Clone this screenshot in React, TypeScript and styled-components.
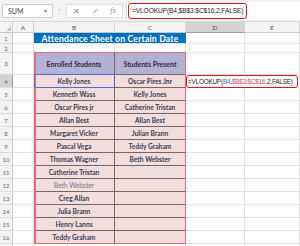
import styled, { createGlobalStyle, css } from 'styled-components';

const GlobalStyle = createGlobalStyle`
  html, body {
    margin: 0;
    padding: 0;
    background: #ffffff;
  }
  body {
    font-family: 'Lato', 'Liberation Sans', sans-serif;
    width: 300px;
    height: 246px;
    overflow: hidden;
  }
`;

const Page = styled.div`
  width: 300px;
  height: 246px;
  overflow: hidden;
  background: #ffffff;
`;

const FormulaBar = styled.div`
  display: flex;
  align-items: center;
  height: 22px;
  padding: 0 0 0 2px;
  background: #f3f3f3;
  border-bottom: 1px solid #d6d6d6;
  box-sizing: border-box;
`;

const NameBox = styled.div`
  display: flex;
  align-items: center;
  justify-content: space-between;
  width: 51px;
  height: 14px;
  padding: 0 4px 0 5px;
  box-sizing: border-box;
  background: #ffffff;
  border: 1px solid #cfcfcf;
  font-size: 7px;
  color: #444444;
`;

const Caret = styled.span`
  font-size: 5px;
  color: #777777;
`;

const Dots = styled.div`
  width: 13px;
  text-align: center;
  color: #b0b0b0;
  font-size: 7px;
`;

const ButtonBox = styled.div`
  display: flex;
  align-items: center;
  justify-content: space-around;
  width: 57px;
  height: 14px;
  background: #ffffff;
  border: 1px solid #dedede;
  box-sizing: border-box;
  color: #8a8a8a;
  font-size: 8px;
`;

const Fx = styled.span`
  font-style: italic;
  font-family: 'Liberation Serif', serif;
`;

const FormulaInput = styled.div`
  flex: 1;
  height: 18px;
  margin-left: 3px;
  display: flex;
  align-items: center;
  background: #ffffff;
  border-left: 1px solid #dedede;
`;

const Callout = styled.div`
  display: flex;
  align-items: center;
  height: 14px;
  padding: 0 3px;
  margin-left: 1px;
  border: 1.5px solid #e2121b;
  border-radius: 3px;
  font-family: 'Liberation Sans', sans-serif;
  font-size: 6.6px;
  color: #222222;
  letter-spacing: -0.1px;
  white-space: nowrap;
`;

const gridTemplate = css`
  display: grid;
  grid-template-columns: 13px 21px 81px 71px 59px 55px;
  grid-template-rows: 11px 11px 9px 22px repeat(13, 13px) 13px;
`;

const SheetWrap = styled.div`
  position: relative;
`;

const Sheet = styled.div`
  ${gridTemplate};
`;

const Overlay = styled.div`
  ${gridTemplate};
  position: absolute;
  inset: 0;
  pointer-events: none;
`;

const ColHead = styled.div<{ $active?: boolean }>`
  display: flex;
  align-items: center;
  justify-content: center;
  font-size: 6.5px;
  color: #555555;
  background: ${(p) => (p.$active ? '#d3d3d3' : '#f3f3f3')};
  border-right: 1px solid #d4d4d4;
  border-bottom: 1px solid ${(p) => (p.$active ? '#9c9c9c' : '#c8c8c8')};
  box-sizing: border-box;
`;

const Corner = styled(ColHead)`
  position: relative;
  &::after {
    content: '';
    position: absolute;
    right: 1px;
    bottom: 1px;
    border-left: 5px solid transparent;
    border-bottom: 5px solid #c5c5c5;
  }
`;

const RowHead = styled.div<{ $active?: boolean }>`
  display: flex;
  align-items: center;
  justify-content: center;
  font-size: 6px;
  color: #666666;
  background: ${(p) => (p.$active ? '#d3d3d3' : '#f3f3f3')};
  border-right: 1px solid ${(p) => (p.$active ? '#9c9c9c' : '#c8c8c8')};
  border-bottom: 1px solid #dcdcdc;
  box-sizing: border-box;
`;

const Cell = styled.div`
  border-right: 1px solid #e1e1e1;
  border-bottom: 1px solid #e1e1e1;
  box-sizing: border-box;
`;

const Title = styled.div`
  grid-column: span 2;
  display: flex;
  align-items: center;
  justify-content: center;
  background: #0070c0;
  color: #ffffff;
  font-weight: 700;
  font-size: 8.7px;
  letter-spacing: 0.15px;
  border-bottom: 1px solid #e1e1e1;
  box-sizing: border-box;
`;

const tableCell = css`
  display: flex;
  align-items: center;
  justify-content: center;
  border-right: 1px solid #75666a;
  border-bottom: 1px solid #75666a;
  box-sizing: border-box;
  font-size: 6.7px;
  font-weight: 700;
  white-space: nowrap;
`;

const HeadCell = styled.div`
  ${tableCell};
  background: #b3b2d4;
  color: #2b2b3a;
  font-size: 7px;
`;

const BodyCell = styled.div<{ $light?: boolean }>`
  ${tableCell};
  background: #f2dddc;
  color: ${(p) => (p.$light ? '#7d7595' : '#3a3e55')};
  font-weight: ${(p) => (p.$light ? 400 : 700)};
`;

const FormulaCell = styled.div`
  grid-column: span 2;
  display: flex;
  align-items: center;
  padding-left: 2px;
  font-family: 'Liberation Sans', sans-serif;
  font-size: 6.3px;
  letter-spacing: -0.15px;
  color: #222222;
  white-space: nowrap;
  border-bottom: 1px solid #e1e1e1;
  box-sizing: border-box;
`;

const Ref = styled.span<{ $color: string }>`
  color: ${(p) => p.$color};
`;

const RangeMark = styled.div`
  grid-column: 3 / 5;
  grid-row: 4 / 18;
  border: 1px solid #e26b7a;
  border-left-width: 2px;
  box-sizing: border-box;
  margin-top: -1px;
`;

const CellMark = styled.div`
  grid-column: 3 / 4;
  grid-row: 5 / 6;
  border: 1px solid #4a6fd0;
  box-sizing: border-box;
  margin-top: -1px;
`;

const Annotation = styled.div`
  grid-column: 5 / 7;
  grid-row: 5 / 6;
  border: 1.5px solid #e2121b;
  border-radius: 3px;
  margin: 0 2px 0 0;
  box-sizing: border-box;
`;

const Row = styled.div`
  display: contents;
`;

const enrolled = [
  'Kelly Jones',
  'Kenneth Wass',
  'Oscar Pires jr',
  'Allan Best',
  'Margaret Vicker',
  'Pascal Vega',
  'Thomas Wagner',
  'Catherine Tristan',
  'Beth Webster',
  'Creg Allan',
  'Julia Brann',
  'Henry Lanns',
  'Teddy Graham',
];

const present = [
  'Oscar Pires Jnr',
  'Kelly Jones',
  'Catherine Tristan',
  'Allan Best',
  'Julian Brann',
  'Teddy Graham',
  'Beth Webster',
  '',
  '',
  '',
  '',
  '',
  '',
];

function App() {
  return (
    <Page>
      <GlobalStyle />
      <FormulaBar>
        <NameBox>
          SUM
          <Caret>▼</Caret>
        </NameBox>
        <Dots>⋮</Dots>
        <ButtonBox>
          <span>✕</span>
          <span>✓</span>
          <Fx>fx</Fx>
        </ButtonBox>
        <FormulaInput>
          <Callout>=VLOOKUP(B4,$B$3:$C$16,2,FALSE)</Callout>
        </FormulaInput>
      </FormulaBar>
      <SheetWrap>
        <Sheet>
          <Corner />
          <ColHead>A</ColHead>
          <ColHead>B</ColHead>
          <ColHead>C</ColHead>
          <ColHead $active>D</ColHead>
          <ColHead>E</ColHead>

          <RowHead>1</RowHead>
          <Cell />
          <Title>Attendance Sheet on Certain Date</Title>
          <Cell />
          <Cell />

          <RowHead>2</RowHead>
          <Cell />
          <Cell />
          <Cell />
          <Cell />
          <Cell />

          <RowHead>3</RowHead>
          <Cell />
          <HeadCell>Enrolled Students</HeadCell>
          <HeadCell>Students Present</HeadCell>
          <Cell />
          <Cell />

          {enrolled.map((name, i) => (
            <Row key={name}>
              <RowHead $active={i === 0}>{i + 4}</RowHead>
              <Cell />
              <BodyCell $light={name === 'Beth Webster'}>{name}</BodyCell>
              <BodyCell>{present[i]}</BodyCell>
              {i === 0 ? (
                <FormulaCell>
                  =VLOOKUP(<Ref $color="#2f6ad8">B4</Ref>,<Ref $color="#d6455a">$B$3:$C$16</Ref>,2,FALSE)
                </FormulaCell>
              ) : (
                <>
                  <Cell />
                  <Cell />
                </>
              )}
            </Row>
          ))}

          <RowHead />
          <Cell />
          <Cell />
          <Cell />
          <Cell />
          <Cell />
        </Sheet>
        <Overlay>
          <RangeMark />
          <CellMark />
          <Annotation />
        </Overlay>
      </SheetWrap>
    </Page>
  );
}

export default App;
